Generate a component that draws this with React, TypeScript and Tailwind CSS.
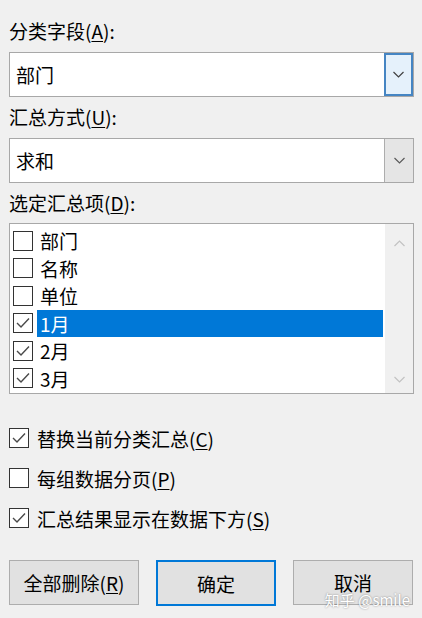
import React from 'react';

const FONT = "font-['Noto_Sans_CJK_SC','Noto_Sans',sans-serif]";

function Chevron({ up = false, color = '#404040' }: { up?: boolean; color?: string }) {
  return (
    <svg width="11" height="7" viewBox="0 0 11 7" fill="none">
      <path
        d={up ? 'M0.5 6 L5.5 1 L10.5 6' : 'M0.5 1 L5.5 6 L10.5 1'}
        stroke={color}
        strokeWidth="1.2"
      />
    </svg>
  );
}

function Box({ checked }: { checked: boolean }) {
  return (
    <span className="flex h-[20px] w-[20px] shrink-0 items-center justify-center border border-[#333333] bg-white">
      {checked && (
        <svg width="16" height="16" viewBox="0 0 16 16" fill="none">
          <path d="M2 8 L6 12 L14 3.5" stroke="#4a4a4a" strokeWidth="1.4" />
        </svg>
      )}
    </span>
  );
}

function Label({ text, hot, h }: { text: string; hot: string; h: string }) {
  return (
    <div className={`flex items-center ${h} pb-[2px] text-[19px] leading-none text-black`}>
      {text}(<span className="underline underline-offset-2">{hot}</span>):
    </div>
  );
}

function Combo({ value, focused }: { value: string; focused?: boolean }) {
  return (
    <div className="flex h-[45px] border border-[#a8a8a8] bg-white">
      <div className="flex flex-1 items-center pl-[6px] text-[19px] leading-none text-black">{value}</div>
      {focused ? (
        <div className="flex w-[29px] items-center justify-center border-2 border-[#4585c3] bg-[#e5f1fb]">
          <Chevron />
        </div>
      ) : (
        <div className="flex w-[29px] items-center justify-center border-l border-[#adadad] bg-[#e5e5e5]">
          <Chevron color="#5a5a5a" />
        </div>
      )}
    </div>
  );
}

const items = [
  { name: '部门', checked: false },
  { name: '名称', checked: false },
  { name: '单位', checked: false },
  { name: '1月', checked: true, selected: true },
  { name: '2月', checked: true },
  { name: '3月', checked: true },
];

const options = [
  { text: '替换当前分类汇总', hot: 'C', checked: true },
  { text: '每组数据分页', hot: 'P', checked: false },
  { text: '汇总结果显示在数据下方', hot: 'S', checked: true },
];

export default function App() {
  return (
    <div className={`relative h-[618px] w-[422px] overflow-hidden bg-[#f0f0f0] pl-[9px] pr-[8px] pt-[11px] ${FONT}`}>
      <Label text="分类字段" hot="A" h="h-[41px]" />
      <Combo value="部门" focused />
      <Label text="汇总方式" hot="U" h="h-[41px]" />
      <Combo value="求和" />
      <Label text="选定汇总项" hot="D" h="h-[40px]" />

      {/* List box */}
      <div className="flex h-[171px] border border-[#a8a8a8] bg-white">
        <div className="flex flex-1 flex-col pt-[3px]">
          {items.map((it) => (
            <div key={it.name} className="flex h-[27.5px] items-center pl-[3px] pr-[2px]">
              <Box checked={it.checked} />
              <span
                className={`ml-[4px] flex h-full flex-1 items-center pl-[3px] text-[19px] leading-none ${
                  it.selected ? 'bg-[#0078d7] text-white' : 'text-black'
                }`}
              >
                {it.name}
              </span>
            </div>
          ))}
        </div>
        <div className="flex w-[28px] flex-col items-center justify-between bg-[#f0f0f0] pb-[10px] pt-[16px]">
          <Chevron up color="#c2c2c2" />
          <Chevron color="#c2c2c2" />
        </div>
      </div>

      {/* Options */}
      <div className="mt-[24px] flex flex-col">
        {options.map((o) => (
          <div key={o.text} className="flex h-[40px] items-center">
            <Box checked={o.checked} />
            <span className="ml-[8px] text-[19px] leading-none text-black">
              {o.text}(<span className="underline underline-offset-2">{o.hot}</span>)
            </span>
          </div>
        ))}
      </div>

      {/* Buttons */}
      <div className="mt-[22px] flex justify-between pr-[1px]">
        <button className="flex h-[45px] w-[130px] items-center justify-center border border-[#adadad] bg-[#e1e1e1] text-[19px] leading-none text-black">
          全部删除(<span className="underline underline-offset-2">R</span>)
        </button>
        <button className="flex h-[46px] w-[120px] items-center justify-center border-2 border-[#0078d7] bg-[#e1e1e1] text-[19px] leading-none text-black">
          确定
        </button>
        <button className="flex h-[45px] w-[120px] items-center justify-center border border-[#adadad] bg-[#e1e1e1] text-[19px] leading-none text-black">
          取消
        </button>
      </div>

      {/* Watermark */}
      <div className="absolute bottom-[11px] right-[12px] text-[15px] leading-none text-white [text-shadow:0_0_2px_rgba(0,0,0,0.45)]">
        知乎 @smile
      </div>
    </div>
  );
}
